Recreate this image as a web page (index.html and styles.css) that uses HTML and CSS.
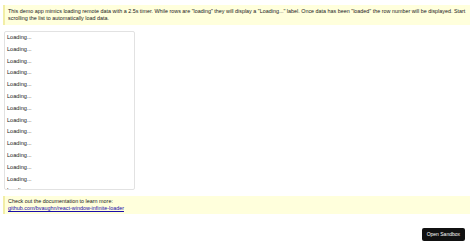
FILE: index.html
```html
<!DOCTYPE html>
<html>
<head>
<meta charset="utf-8">
<link rel="stylesheet" href="styles.css">
</head>
<body>
<div class="page">
  <div class="note top">This demo app mimics loading remote data with a 2.5s timer. While rows are "loading" they will display a "Loading..." label. Once data has been "loaded" the row number will be displayed. Start scrolling the list to automatically load data.</div>
  <div class="list">
    <div class="row">Loading...</div>
    <div class="row">Loading...</div>
    <div class="row">Loading...</div>
    <div class="row">Loading...</div>
    <div class="row">Loading...</div>
    <div class="row">Loading...</div>
    <div class="row">Loading...</div>
    <div class="row">Loading...</div>
    <div class="row">Loading...</div>
    <div class="row">Loading...</div>
    <div class="row">Loading...</div>
    <div class="row">Loading...</div>
    <div class="row">Loading...</div>
    <div class="row">Loading...</div>
  </div>
  <div class="note bottom">Check out the documentation to learn more:<br><a href="#">github.com/bvaughn/react-window-infinite-loader</a></div>
  <div class="actions"><span class="btn">Open Sandbox</span></div>
</div>
</body>
</html>
```
FILE: styles.css
```css
html, body {
  margin: 0;
  padding: 0;
  background: #ffffff;
}
.page {
  font-family: "Liberation Sans", Arial, sans-serif;
  font-size: 5.4px;
  color: #222;
  padding: 5px 4px 0 3px;
  display: flex;
  flex-direction: column;
}
.note {
  background: #ffffdc;
  border-left: 2px solid #f2eea6;
  line-height: 7px;
}
.top {
  padding: 3px 2px 3px 3px;
}
.list {
  margin-top: 6px;
  margin-left: 1px;
  width: 129px;
  height: 157px;
  border: 1px solid #e2e2e2;
  border-radius: 2px;
  overflow: hidden;
}
.row {
  height: 11.8px;
  line-height: 11.8px;
  padding-left: 2px;
  font-size: 5.6px;
}
.bottom {
  margin-top: 6px;
  padding: 2px 5px 2px 3px;
}
.bottom a {
  color: #1a0dab;
  text-decoration: underline;
}
.actions {
  display: flex;
  justify-content: flex-end;
  padding-right: 5px;
  margin-top: 14px;
}
.btn {
  background: #111;
  color: #fff;
  font-size: 5px;
  line-height: 13px;
  padding: 0 5px;
  border-radius: 2px;
}
```
